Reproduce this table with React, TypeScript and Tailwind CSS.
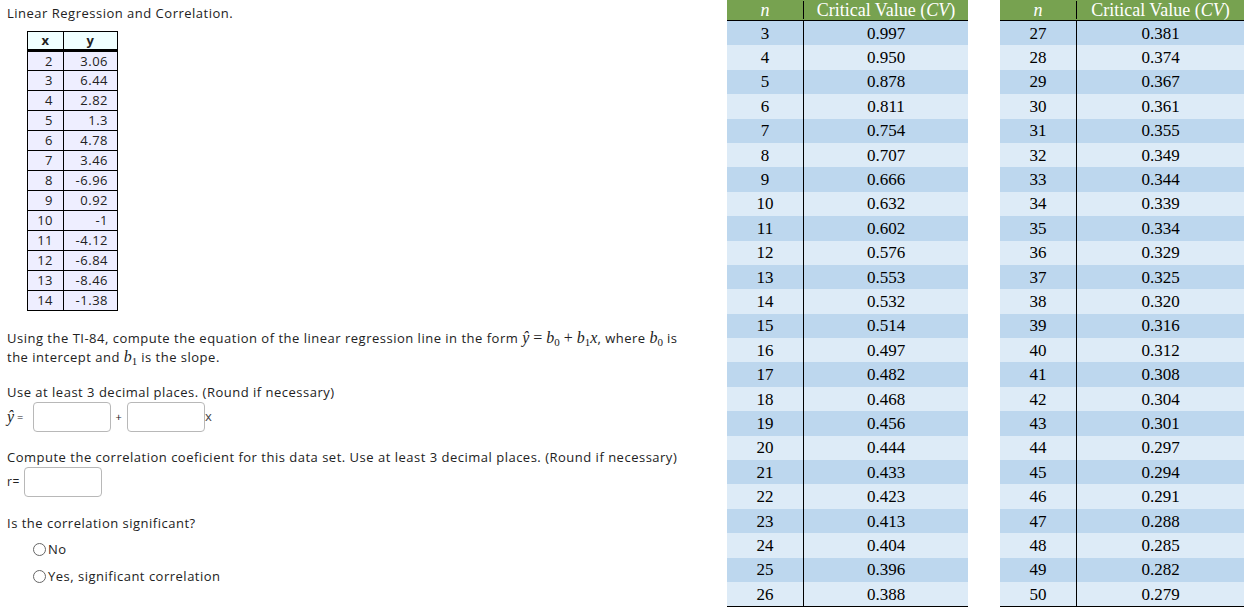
const data: [number, string][] = [
  [2, "3.06"],
  [3, "6.44"],
  [4, "2.82"],
  [5, "1.3"],
  [6, "4.78"],
  [7, "3.46"],
  [8, "-6.96"],
  [9, "0.92"],
  [10, "-1"],
  [11, "-4.12"],
  [12, "-6.84"],
  [13, "-8.46"],
  [14, "-1.38"],
];

const cvLeft: [number, string][] = [
  [3, "0.997"], [4, "0.950"], [5, "0.878"], [6, "0.811"], [7, "0.754"], [8, "0.707"],
  [9, "0.666"], [10, "0.632"], [11, "0.602"], [12, "0.576"], [13, "0.553"], [14, "0.532"],
  [15, "0.514"], [16, "0.497"], [17, "0.482"], [18, "0.468"], [19, "0.456"], [20, "0.444"],
  [21, "0.433"], [22, "0.423"], [23, "0.413"], [24, "0.404"], [25, "0.396"], [26, "0.388"],
];

const cvRight: [number, string][] = [
  [27, "0.381"], [28, "0.374"], [29, "0.367"], [30, "0.361"], [31, "0.355"], [32, "0.349"],
  [33, "0.344"], [34, "0.339"], [35, "0.334"], [36, "0.329"], [37, "0.325"], [38, "0.320"],
  [39, "0.316"], [40, "0.312"], [41, "0.308"], [42, "0.304"], [43, "0.301"], [44, "0.297"],
  [45, "0.294"], [46, "0.291"], [47, "0.288"], [48, "0.285"], [49, "0.282"], [50, "0.279"],
];

function Math({ children }: { children: React.ReactNode }) {
  return (
    <span className="font-['Liberation_Serif',serif] text-[16px] italic leading-none tracking-normal">{children}</span>
  );
}

function Op({ children }: { children: React.ReactNode }) {
  return <span className="mx-[4px] not-italic">{children}</span>;
}

function Sub({ children }: { children: React.ReactNode }) {
  return <span className="relative top-[3px] text-[11px] not-italic">{children}</span>;
}

function Box({ className = "" }: { className?: string }) {
  return (
    <span
      className={`inline-block h-[30px] w-[78px] rounded-[4px] border border-[#b8b8b8] bg-white align-middle ${className}`}
    />
  );
}

function Radio({ label }: { label: string }) {
  return (
    <div className="flex items-center gap-[2px] pl-[26px]">
      <span className="inline-block h-[13px] w-[13px] rounded-full border border-[#666] bg-white" />
      <span>{label}</span>
    </div>
  );
}

function CvTable({ rows, className = "" }: { rows: [number, string][]; className?: string }) {
  return (
    <div className={`font-['Liberation_Serif',serif] text-[17px] text-black ${className}`}>
      <div className="flex h-[21px] items-center overflow-hidden border-b border-black bg-[#77a250] text-[18px] leading-none text-white">
        <div className="w-[76px] text-center italic">n</div>
        <div className="flex-1 border-l border-black text-center">
          Critical Value (<span className="italic">CV</span>)
        </div>
      </div>
      {rows.map(([n, v], i) => (
        <div
          key={n}
          className={`flex h-[24.4px] items-center leading-none ${i % 2 === 0 ? "bg-[#bdd7ee]" : "bg-[#ddebf7]"}`}
        >
          <div className="w-[76px] text-center">{n}</div>
          <div className="flex h-full flex-1 items-center justify-center border-l border-black">{v}</div>
        </div>
      ))}
      <div className="border-t border-black" />
    </div>
  );
}

export default function App() {
  return (
    <div className="flex h-[607px] w-[1244px] overflow-hidden bg-white font-['Open_Sans',sans-serif] text-[13px] text-[#222]">
      <div className="w-[727px] shrink-0 pl-[7px] tracking-[0.5px]">
        <div className="pt-[5px] leading-[17px]">Linear Regression and Correlation.</div>

        <table className="ml-[20px] mt-[9px] border-collapse text-[13px]">
          <thead>
            <tr className="bg-[#f0ffff]">
              <th className="h-[19px] w-[36px] border border-black border-b-[3px] text-center font-bold leading-none">x</th>
              <th className="w-[54px] border border-black border-b-[3px] text-center font-bold leading-none">y</th>
            </tr>
          </thead>
          <tbody>
            {data.map(([x, y]) => (
              <tr key={x} className="h-[20px] bg-[#eeeeff] leading-none">
                <td className="border border-black pr-[10px] text-right">{x}</td>
                <td className="border border-black pr-[9px] text-right">{y}</td>
              </tr>
            ))}
          </tbody>
        </table>

        <p className="mt-[18px] leading-[19px]">
          Using the TI-84, compute the equation of the linear regression line in the form{" "}
          <Math>
            ŷ<Op>=</Op>b<Sub>0</Sub>
            <Op>+</Op>b<Sub>1</Sub>x
          </Math>
          , where <Math>b<Sub>0</Sub></Math> is
          <br />
          the intercept and <Math>b<Sub>1</Sub></Math> is the slope.
        </p>

        <div className="mt-[17px] leading-[17px]">Use at least 3 decimal places. (Round if necessary)</div>
        <div className="mt-[1px] flex items-center">
          <Math>ŷ</Math>
          <span className="ml-[3px] text-[11px]">=</span>
          <Box className="ml-[9px]" />
          <span className="w-[16px] text-center text-[11px]">+</span>
          <Box />
          <span className="text-[13px] text-[#444]">x</span>
        </div>

        <div className="mt-[17px] leading-[17px]">
          Compute the correlation coeficient for this data set. Use at least 3 decimal places. (Round if necessary)
        </div>
        <div className="mt-[1px] flex items-center">
          <span className="text-[12px]">r=</span>
          <Box className="ml-[4px]" />
        </div>

        <div className="mt-[18px] leading-[17px]">Is the correlation significant?</div>
        <div className="mt-[9px] flex flex-col gap-[10px] leading-[17px]">
          <Radio label="No" />
          <Radio label="Yes, significant correlation" />
        </div>
      </div>

      <div className="flex">
        <CvTable rows={cvLeft} className="w-[241px]" />
        <CvTable rows={cvRight} className="ml-[32px] w-[244px]" />
      </div>
    </div>
  );
}
